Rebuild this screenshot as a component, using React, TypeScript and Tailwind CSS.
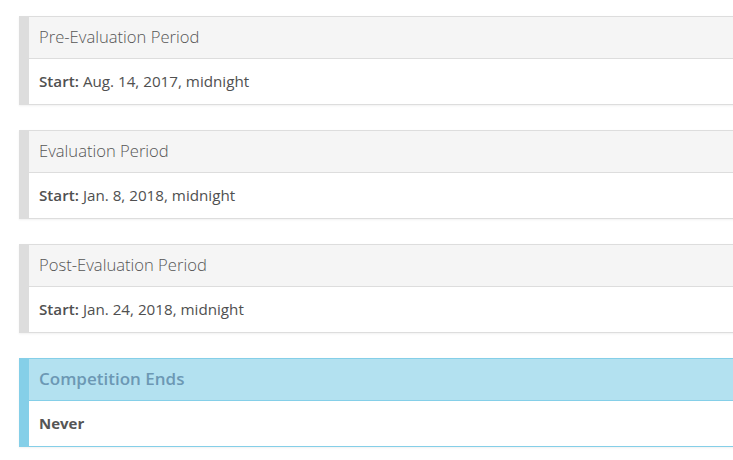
import React from "react";

const periods = [
  { title: "Pre-Evaluation Period", date: "Aug. 14, 2017, midnight" },
  { title: "Evaluation Period", date: "Jan. 8, 2018, midnight" },
  { title: "Post-Evaluation Period", date: "Jan. 24, 2018, midnight" },
];

export default function App() {
  return (
    <div
      className="w-[733px] h-[460px] overflow-hidden bg-white"
      style={{ fontFamily: '"Open Sans", "Noto Sans", sans-serif' }}
    >
      <div className="pt-[16px] pl-[19px] w-[760px] flex flex-col gap-[25px]">
        {periods.map((p) => (
          <div
            key={p.title}
            className="border border-[#dddddd] border-l-[10px] shadow-[0_1px_2px_rgba(0,0,0,0.06)]"
          >
            <div className="h-[42px] bg-[#f5f5f5] border-b border-[#dddddd] flex items-center pl-[10px] pb-[1px] text-[16.6px] font-light text-[#555555]">
              {p.title}
            </div>
            <div className="h-[45px] flex items-center pl-[10px] text-[15.2px] text-[#505050]">
              <span className="font-semibold mr-[4px]">Start:</span>
              {p.date}
            </div>
          </div>
        ))}
        <div className="border border-[#85cfe8] border-l-[10px] shadow-[0_1px_2px_rgba(0,0,0,0.06)]">
          <div className="h-[42px] bg-[#b3e1f0] border-b border-[#85cfe8] flex items-center pl-[10px] pb-[1px] text-[17px] font-semibold text-[#6c98b4]">
            Competition Ends
          </div>
          <div className="h-[45px] flex items-center pl-[10px] text-[15px] font-bold text-[#555555]">
            Never
          </div>
        </div>
      </div>
    </div>
  );
}
